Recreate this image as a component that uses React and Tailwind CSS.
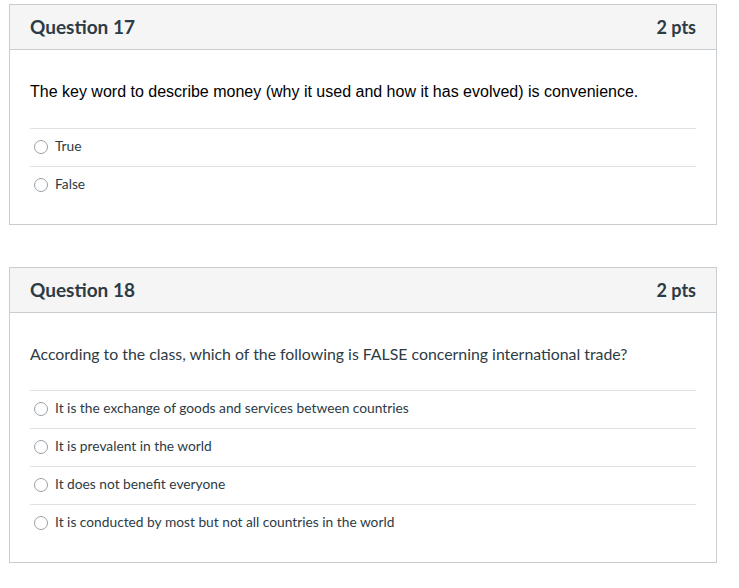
const lato = { fontFamily: 'Lato, "Open Sans", sans-serif' }

function Radio() {
  return <span className="mt-[1px] inline-block h-[14px] w-[14px] shrink-0 rounded-full border border-[#9aa1a7] bg-white" />
}

function Option({ label }) {
  return (
    <div className="flex h-[38px] items-center gap-[7px] border-t border-[#dfe2e5] pb-[2px] pl-[4px]">
      <Radio />
      <span className="text-[13.75px] text-[#2d3b45]">{label}</span>
    </div>
  )
}

function QuestionCard({ number, points, text, arial, options, className }) {
  return (
    <div className={`ml-[9px] w-[708px] border border-[#c7cdd1] bg-white ${className}`}>
      <div className="flex h-[45px] items-center justify-between border-b border-[#c7cdd1] bg-[#f5f5f5] px-5">
        <h2 className="text-[19px] font-bold text-[#2d3b45]">Question {number}</h2>
        <span className="text-[18px] font-bold text-[#2d3b45]">{points} pts</span>
      </div>
      <div className={`px-5 pb-5 ${arial ? 'pt-[30px]' : 'pt-[29px]'}`}>
        <p
          className="mb-[24px] text-[16px] leading-6 text-[#000]"
          style={arial ? { fontFamily: '"Liberation Sans", Arial, sans-serif' } : { fontSize: '15.85px', color: '#2d3b45' }}
        >
          {text}
        </p>
        <div>
          {options.map((o) => (
            <Option key={o} label={o} />
          ))}
        </div>
      </div>
    </div>
  )
}

export default function App() {
  return (
    <div className="min-h-[588px] w-[739px] bg-white pt-[4px]" style={lato}>
      <QuestionCard
        number={17}
        points={2}
        arial
        text="The key word to describe money (why it used and how it has evolved) is convenience."
        options={['True', 'False']}
      />
      <QuestionCard
        className="mt-[42px]"
        number={18}
        points={2}
        text="According to the class, which of the following is FALSE concerning international trade?"
        options={[
          'It is the exchange of goods and services between countries',
          'It is prevalent in the world',
          'It does not benefit everyone',
          'It is conducted by most but not all countries in the world',
        ]}
      />
    </div>
  )
}
